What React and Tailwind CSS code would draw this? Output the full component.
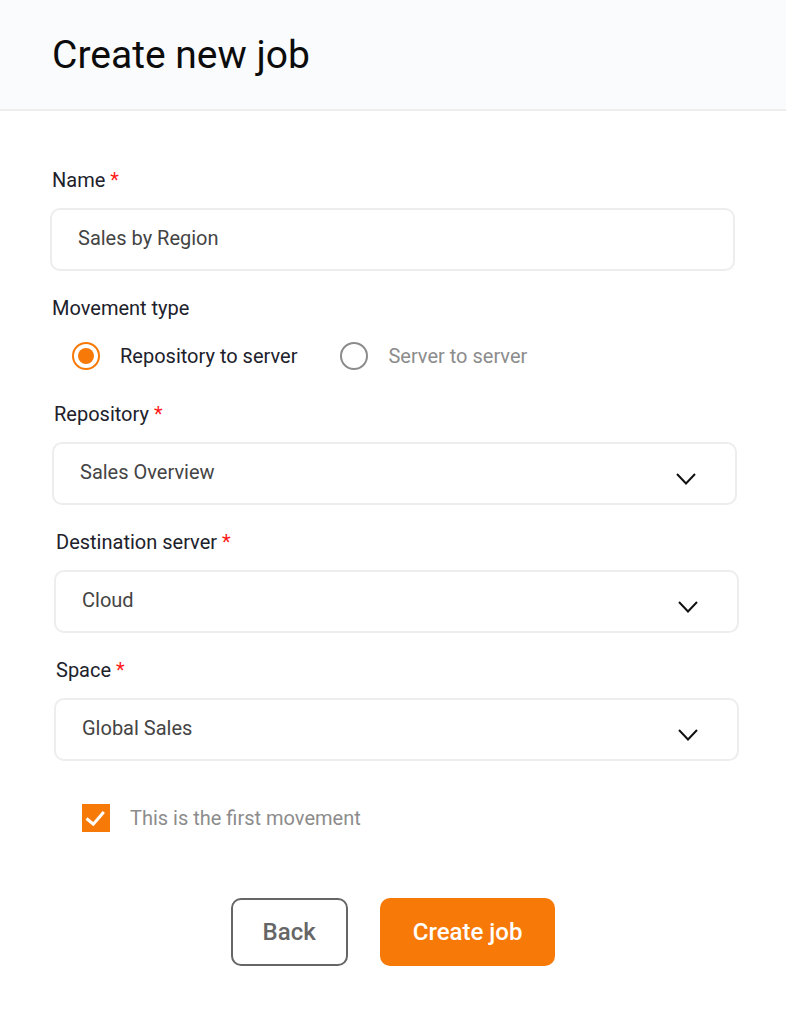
import { useState } from "react";

function Label({ htmlFor, children }) {
  return (
    <label htmlFor={htmlFor} className="block pl-0.5 text-xl leading-6 text-[#20212b]">
      {children} <span className="text-[#ff1a1a]">*</span>
    </label>
  );
}

function SelectField({ id, label, options }) {
  return (
    <div className="flex flex-col gap-4">
      <Label htmlFor={id}>{label}</Label>
      <div className="relative">
        <select
          id={id}
          className="block h-[63px] w-full appearance-none rounded-[10px] border-2 border-[#ededed] bg-white pr-20 pb-[3px] pl-[26px] text-xl text-[#444444]"
        >
          {options.map((option) => (
            <option key={option}>{option}</option>
          ))}
        </select>
        <svg
          className="pointer-events-none absolute top-[30px] right-10 h-[14px] w-[22px]"
          viewBox="0 0 22 14"
          fill="none"
          stroke="#111111"
          strokeWidth="2"
          aria-hidden="true"
        >
          <path d="M2 2 L11 11.5 L20 2" />
        </svg>
      </div>
    </div>
  );
}

function RadioOption({ label, checked, onChange }) {
  return (
    <label
      className={
        checked
          ? "flex items-center gap-5 text-xl leading-7 text-[#20212b]"
          : "flex items-center gap-5 text-xl leading-7 text-[#8c8c8c]"
      }
    >
      <span className="grid size-7 place-items-center">
        <input
          type="radio"
          name="movement"
          checked={checked}
          onChange={onChange}
          className="col-start-1 row-start-1 size-7 appearance-none rounded-full border-2 border-[#8c8c8c] checked:border-[#f77a08]"
        />
        {checked && (
          <span className="pointer-events-none col-start-1 row-start-1 size-4 rounded-full bg-[#f77a08]" />
        )}
      </span>
      {label}
    </label>
  );
}

export default function App() {
  const [movement, setMovement] = useState("repository");
  const [first, setFirst] = useState(true);

  return (
    <div className="min-h-screen bg-white font-['Roboto',sans-serif]">
      <header className="border-b-2 border-[#ededed] bg-[#fafbfd] px-[52px] pt-[30px] pb-[29px]">
        <h1 className="text-[39px] leading-[50px] text-[#0c0c0c]">Create new job</h1>
      </header>

      <form onSubmit={(event) => event.preventDefault()} className="pt-[57px] pb-16">
        <div className="flex flex-col gap-4 pr-[51px] pl-[50px]">
          <Label htmlFor="name">Name</Label>
          <input
            id="name"
            type="text"
            defaultValue="Sales by Region"
            className="h-[63px] w-full rounded-[10px] border-2 border-[#ededed] bg-white px-[26px] pb-[3px] text-xl text-[#444444]"
          />
        </div>

        <fieldset className="pt-[25px] pr-[51px] pl-[50px]">
          <legend className="contents">
            <span className="block pl-0.5 text-xl leading-6 text-[#20212b]">Movement type</span>
          </legend>
          <div className="flex flex-wrap gap-x-[43px] pt-[22px] pl-[22px]">
            <RadioOption
              label="Repository to server"
              checked={movement === "repository"}
              onChange={() => setMovement("repository")}
            />
            <RadioOption
              label="Server to server"
              checked={movement === "server"}
              onChange={() => setMovement("server")}
            />
          </div>
        </fieldset>

        <div className="pt-8 pr-[49px] pl-[52px]">
          <SelectField
            id="repository"
            label="Repository"
            options={["Sales Overview", "Inventory"]}
          />
        </div>

        <div className="flex flex-col gap-[25px] pt-[25px] pr-[47px] pl-[54px]">
          <SelectField id="destination" label="Destination server" options={["Cloud", "On-premise"]} />
          <SelectField id="space" label="Space" options={["Global Sales", "Regional Sales"]} />
        </div>

        <label className="flex items-center gap-5 pt-[43px] pl-[82px] text-xl leading-7 text-[#8c8c8c]">
          <span className="grid size-7">
            <input
              type="checkbox"
              checked={first}
              onChange={(event) => setFirst(event.target.checked)}
              className="col-start-1 row-start-1 size-7 appearance-none border-2 border-[#8c8c8c] checked:border-[#f77a08] checked:bg-[#f77a08]"
            />
            {first && (
              <svg
                className="pointer-events-none col-start-1 row-start-1 size-7"
                viewBox="0 0 28 28"
                fill="none"
                stroke="white"
                strokeWidth="3"
                aria-hidden="true"
              >
                <path d="M4.5 14.5 L11.3 20.2 L21.8 8" />
              </svg>
            )}
          </span>
          This is the first movement
        </label>

        <div className="flex flex-wrap justify-center gap-8 pt-[66px]">
          <button
            type="button"
            className="h-[68px] rounded-[10px] border-2 border-[#666666] bg-white px-[30px] text-2xl font-medium text-[#666666]"
          >
            Back
          </button>
          <button
            type="submit"
            className="h-[68px] rounded-[10px] bg-[#f77a08] px-[33px] text-2xl font-medium text-white"
          >
            Create job
          </button>
        </div>
      </form>
    </div>
  );
}
